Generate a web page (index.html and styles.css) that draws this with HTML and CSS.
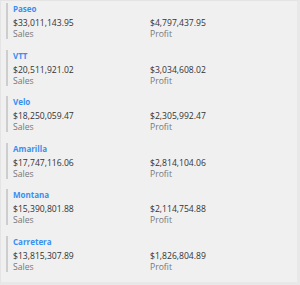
FILE: index.html
```html
<!DOCTYPE html>
<html>
<head>
<meta charset="utf-8">
<link rel="stylesheet" href="styles.css">
</head>
<body>
<div class="frame">
  <div class="card">
    <div class="title">Paseo</div>
    <div class="row">
      <div class="cell"><div class="value">$33,011,143.95</div><div class="label">Sales</div></div>
      <div class="cell"><div class="value">$4,797,437.95</div><div class="label">Profit</div></div>
    </div>
  </div>
  <div class="card">
    <div class="title">VTT</div>
    <div class="row">
      <div class="cell"><div class="value">$20,511,921.02</div><div class="label">Sales</div></div>
      <div class="cell"><div class="value">$3,034,608.02</div><div class="label">Profit</div></div>
    </div>
  </div>
  <div class="card">
    <div class="title">Velo</div>
    <div class="row">
      <div class="cell"><div class="value">$18,250,059.47</div><div class="label">Sales</div></div>
      <div class="cell"><div class="value">$2,305,992.47</div><div class="label">Profit</div></div>
    </div>
  </div>
  <div class="card">
    <div class="title">Amarilla</div>
    <div class="row">
      <div class="cell"><div class="value">$17,747,116.06</div><div class="label">Sales</div></div>
      <div class="cell"><div class="value">$2,814,104.06</div><div class="label">Profit</div></div>
    </div>
  </div>
  <div class="card">
    <div class="title">Montana</div>
    <div class="row">
      <div class="cell"><div class="value">$15,390,801.88</div><div class="label">Sales</div></div>
      <div class="cell"><div class="value">$2,114,754.88</div><div class="label">Profit</div></div>
    </div>
  </div>
  <div class="card">
    <div class="title">Carretera</div>
    <div class="row">
      <div class="cell"><div class="value">$13,815,307.89</div><div class="label">Sales</div></div>
      <div class="cell"><div class="value">$1,826,804.89</div><div class="label">Profit</div></div>
    </div>
  </div>
</div>
</body>
</html>
```
FILE: styles.css
```css
html, body {
  margin: 0;
  padding: 0;
  background: #f0f0f0;
}
.frame {
  box-sizing: border-box;
  width: 300px;
  height: 285px;
  border: 1px solid #e4e4e4;
  border-right: 3px solid #e8e8e8;
  border-bottom: 3px solid #e8e8e8;
  padding: 2px 0 0 5px;
  display: flex;
  flex-direction: column;
  gap: 10.6px;
  font-family: "Open Sans", "Liberation Sans", sans-serif;
}
.card {
  border-left: 2px solid #cdcdcd;
  padding-left: 5px;
  height: 36px;
}
.title {
  color: #3a8ef0;
  font-weight: 700;
  font-size: 8px;
  line-height: 11px;
}
.row {
  display: grid;
  grid-template-columns: 137px 1fr;
  margin-top: 3px;
}
.value {
  color: #333333;
  font-size: 8.6px;
  line-height: 12px;
}
.label {
  color: #777777;
  font-size: 8.6px;
  line-height: 11px;
}
```
